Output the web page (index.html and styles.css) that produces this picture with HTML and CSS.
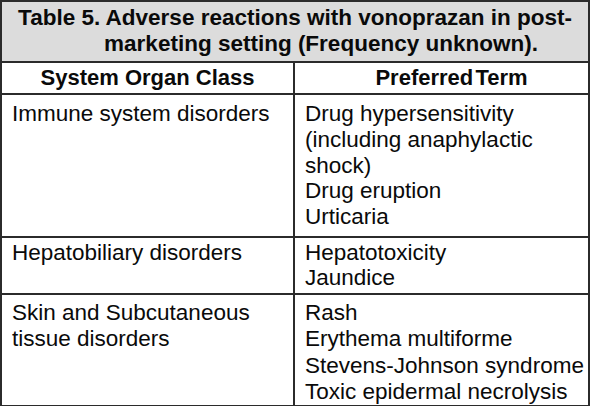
FILE: index.html
```html
<!DOCTYPE html>
<html>
<head>
<meta charset="utf-8">
<link rel="stylesheet" href="styles.css">
</head>
<body>
<table class="t">
  <colgroup>
    <col class="col1">
    <col class="col2">
  </colgroup>
  <thead>
    <tr>
      <th class="title" colspan="2">
        <span class="tl1">Table 5. Adverse reactions with vonoprazan in post-</span>
        <span class="tl2">marketing setting (Frequency unknown).</span>
      </th>
    </tr>
    <tr class="head">
      <th class="c1">System Organ Class</th>
      <th class="c2 pt">Preferred Term</th>
    </tr>
  </thead>
  <tbody>
    <tr class="r1">
      <td class="c1">Immune system disorders</td>
      <td class="c2">Drug hypersensitivity<br>(including anaphylactic<br>shock)<br>Drug eruption<br>Urticaria</td>
    </tr>
    <tr class="r2">
      <td class="c1">Hepatobiliary disorders</td>
      <td class="c2">Hepatotoxicity<br>Jaundice</td>
    </tr>
    <tr class="r3 last">
      <td class="c1">Skin and Subcutaneous<br>tissue disorders</td>
      <td class="c2">Rash<br>Erythema multiforme<br>Stevens-Johnson syndrome<br>Toxic epidermal necrolysis</td>
    </tr>
  </tbody>
</table>
</body>
</html>
```

FILE: styles.css
```css
html, body {
  margin: 0;
  padding: 0;
  background: #ffffff;
}

.t {
  width: 590px;
  border-collapse: separate;
  border-spacing: 0;
  border: 2px solid #2b2b2b;
  font-family: "Liberation Sans", Arial, sans-serif;
  color: #0a0a0a;
  table-layout: fixed;
}

.col1 {
  width: 293px;
}

.t th,
.t td {
  border-bottom: 2px solid #2b2b2b;
  vertical-align: top;
  font-size: 22.5px;
  line-height: 25.7px;
}

.t .last td {
  border-bottom: none;
}

.t .c1 {
  border-right: 2px solid #2b2b2b;
}

.title {
  background: #dcdcdc;
  font-weight: bold;
  font-size: 22px;
  line-height: 24.5px;
  padding: 3px 4px 5px;
  text-align: center;
}

.tl1,
.tl2 {
  display: block;
  white-space: nowrap;
}

.tl2 {
  padding-left: 52px;
}

.head th {
  font-weight: bold;
  font-size: 22px;
  text-align: center;
  padding: 2px 4px 2px;
}

.head .pt {
  padding-left: 24px;
  word-spacing: -4px;
}

.t td {
  padding: 6px 4px 6px 10px;
}

.r2 td {
  padding-top: 2px;
  padding-bottom: 2px;
}

.r3 td {
  line-height: 26.3px;
  padding-top: 5px;
  padding-bottom: 0;
}
```
